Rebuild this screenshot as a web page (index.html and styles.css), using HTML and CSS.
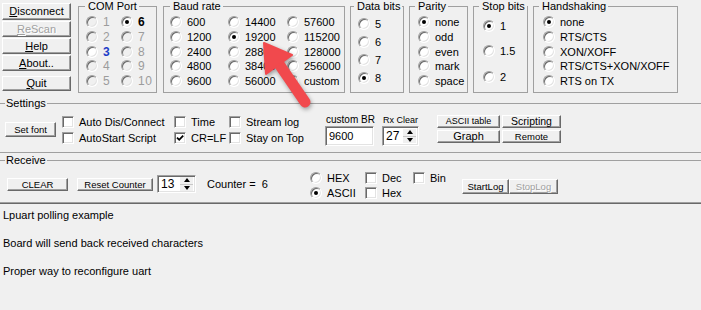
FILE: index.html
```html
<!DOCTYPE html>
<html>
<head>
<meta charset="utf-8">
<link rel="stylesheet" href="styles.css">
</head>
<body>
<div class="top">
  <div class="btncol">
    <div class="btn b1"><u>D</u>isconnect</div>
    <div class="btn dis"><u>R</u>eScan</div>
    <div class="btn"><u>H</u>elp</div>
    <div class="btn"><u>A</u>bout..</div>
    <div class="btn quit"><u>Q</u>uit</div>
  </div>

  <fieldset class="grp com">
    <legend>COM Port</legend>
    <div class="g5">
      <div class="r off"><i class="rb"></i>1</div>
      <div class="r off"><i class="rb"></i>2</div>
      <div class="r avail"><i class="rb"></i>3</div>
      <div class="r off"><i class="rb"></i>4</div>
      <div class="r off"><i class="rb"></i>5</div>
      <div class="r sel"><i class="rb on"></i>6</div>
      <div class="r off"><i class="rb"></i>7</div>
      <div class="r off"><i class="rb"></i>8</div>
      <div class="r off"><i class="rb"></i>9</div>
      <div class="r off"><i class="rb"></i>10</div>
    </div>
  </fieldset>

  <fieldset class="grp baud">
    <legend>Baud rate</legend>
    <div class="g5">
      <div class="r"><i class="rb"></i>600</div>
      <div class="r"><i class="rb"></i>1200</div>
      <div class="r"><i class="rb"></i>2400</div>
      <div class="r"><i class="rb"></i>4800</div>
      <div class="r"><i class="rb"></i>9600</div>
      <div class="r"><i class="rb"></i>14400</div>
      <div class="r"><i class="rb on"></i>19200</div>
      <div class="r"><i class="rb"></i>28800</div>
      <div class="r"><i class="rb"></i>38400</div>
      <div class="r"><i class="rb"></i>56000</div>
      <div class="r"><i class="rb"></i>57600</div>
      <div class="r"><i class="rb"></i>115200</div>
      <div class="r"><i class="rb"></i>128000</div>
      <div class="r"><i class="rb"></i>256000</div>
      <div class="r"><i class="rb"></i>custom</div>
    </div>
  </fieldset>

  <fieldset class="grp data">
    <legend>Data bits</legend>
    <div class="g4">
      <div class="r"><i class="rb"></i>5</div>
      <div class="r"><i class="rb"></i>6</div>
      <div class="r"><i class="rb"></i>7</div>
      <div class="r"><i class="rb on"></i>8</div>
    </div>
  </fieldset>

  <fieldset class="grp parity">
    <legend>Parity</legend>
    <div class="g5">
      <div class="r"><i class="rb on"></i>none</div>
      <div class="r"><i class="rb"></i>odd</div>
      <div class="r"><i class="rb"></i>even</div>
      <div class="r"><i class="rb"></i>mark</div>
      <div class="r"><i class="rb"></i>space</div>
    </div>
  </fieldset>

  <fieldset class="grp stop">
    <legend>Stop bits</legend>
    <div class="g3">
      <div class="r"><i class="rb on"></i>1</div>
      <div class="r"><i class="rb"></i>1.5</div>
      <div class="r"><i class="rb"></i>2</div>
    </div>
  </fieldset>

  <fieldset class="grp hand">
    <legend>Handshaking</legend>
    <div class="g5">
      <div class="r"><i class="rb on"></i>none</div>
      <div class="r"><i class="rb"></i>RTS/CTS</div>
      <div class="r"><i class="rb"></i>XON/XOFF</div>
      <div class="r"><i class="rb"></i>RTS/CTS+XON/XOFF</div>
      <div class="r"><i class="rb"></i>RTS on TX</div>
    </div>
  </fieldset>
</div>

<fieldset class="sect settings">
  <legend>Settings</legend>
  <div class="srow">
    <div class="btn setfont">Set font</div>
    <div class="ccol col1">
      <div class="c"><i class="cb"></i>Auto Dis/Connect</div>
      <div class="c"><i class="cb"></i>AutoStart Script</div>
    </div>
    <div class="ccol col2">
      <div class="c"><i class="cb"></i>Time</div>
      <div class="c"><i class="cb"><svg class="chk" viewBox="0 0 10 10" width="10" height="10"><path d="M2 4.6 L4.2 6.8 L8.2 2.6" fill="none" stroke="#000" stroke-width="1.8"/></svg></i>CR=LF</div>
    </div>
    <div class="ccol col3">
      <div class="c"><i class="cb"></i>Stream log</div>
      <div class="c"><i class="cb"></i>Stay on Top</div>
    </div>
    <div class="fld cbr">
      <div class="flab">custom BR</div>
      <div class="edit">9600</div>
    </div>
    <div class="fld rxc">
      <div class="flab rxlab">Rx Clear</div>
      <div class="spin"><span class="val">27</span><span class="arrows"><span class="ab"><i class="up"></i></span><span class="ab"><i class="dn"></i></span></span></div>
    </div>
    <div class="bgrid">
      <div class="btn sm9">ASCII table</div>
      <div class="btn sm105">Scripting</div>
      <div class="btn">Graph</div>
      <div class="btn sm95">Remote</div>
    </div>
  </div>
</fieldset>

<fieldset class="sect receive">
  <legend>Receive</legend>
  <div class="rrow">
    <div class="btn clear">CLEAR</div>
    <div class="btn reset">Reset Counter</div>
    <div class="spin spin13"><span class="val">13</span><span class="arrows"><span class="ab"><i class="up"></i></span><span class="ab"><i class="dn"></i></span></span></div>
    <div class="counter">Counter =&nbsp; 6</div>
    <div class="rgrp">
      <div class="r"><i class="rb"></i>HEX</div>
      <div class="r"><i class="rb on"></i>ASCII</div>
    </div>
    <div class="rgrp decg">
      <div class="c"><i class="cb"></i>Dec</div>
      <div class="c"><i class="cb"></i>Hex</div>
    </div>
    <div class="rgrp bing">
      <div class="c"><i class="cb"></i>Bin</div>
    </div>
    <div class="btn logb start">StartLog</div>
    <div class="btn logb stoplog dis">StopLog</div>
  </div>
</fieldset>

<div class="memo">
  <div>Lpuart polling example</div>
  <div>&nbsp;</div>
  <div>Board will send back received characters</div>
  <div>&nbsp;</div>
  <div>Proper way to reconfigure uart</div>
</div>

<svg class="arrow" width="701" height="310" viewBox="0 0 701 310">
  <g fill="#f1494d" stroke="#f1494d">
    <line x1="279" y1="64" x2="305" y2="102" stroke-width="11" stroke-linecap="round"/>
    <polygon points="264,43 292,55 266,74" stroke-width="2" stroke-linejoin="round"/>
  </g>
</svg>
</body>
</html>
```
FILE: styles.css
```css
* { box-sizing: border-box; }
html, body { margin: 0; padding: 0; }
body {
  background: #f0f0f0;
  font-family: "Liberation Sans", Arial, sans-serif;
  font-size: 11px;
  color: #000;
  width: 701px;
  height: 310px;
  overflow: hidden;
  position: relative;
}

/* buttons */
.btn {
  display: flex;
  align-items: center;
  justify-content: center;
  background: #f0f0f0;
  border: 1px solid;
  border-color: #fff #696969 #696969 #fff;
  box-shadow: inset -1px -1px #a0a0a0;
  white-space: nowrap;
  color: #000;
  line-height: 11px;
}
.btn.dis { color: #a0a0a0; text-shadow: 1px 1px #fff; }

.top { display: flex; height: 93px; padding-left: 2px; }
.btncol { width: 69px; padding-top: 3px; display: flex; flex-direction: column; gap: 1px; flex: none; }
.btncol .btn { height: 16px; line-height: 13px; }
.btncol .b1 { height: 17px; }
.btncol .quit { margin-top: 4px; height: 15px; }

/* group boxes */
.grp {
  margin: 0;
  padding: 0;
  border: 1px solid #a0a0a0;
  height: 93px;
  min-width: 0;
  flex: none;
}
.grp legend { padding: 0 2px 0 3px; line-height: 13px; font-size: 11px; }
.g5 { display: grid; grid-auto-flow: column; grid-template-rows: repeat(5, 14.7px); padding-top: 2px; }
.g4 { display: grid; grid-template-rows: repeat(4, 18px); padding-top: 2px; }
.g3 { display: grid; grid-template-rows: repeat(3, 25.5px); }

.com { width: 79px; margin-left: 7px; }
.com legend { margin-left: 6px; }
.com .g5 { padding-left: 7px; grid-template-columns: 35px auto; }
.com .r { font-size: 12px; letter-spacing: 0.5px; }
.com .r.off { color: #9c9c9c; }
.com .r.avail { color: #1c3cc8; font-weight: bold; }
.com .r.sel { font-weight: bold; }
.com .r.off .rb { background: #f0f0f0; }

.baud { width: 182px; margin-left: 6px; }
.baud legend { margin-left: 6px; }
.baud .g5 { padding-left: 6px; grid-template-columns: 58px 59px auto; }

.data { width: 54px; margin-left: 5px; }
.data legend { margin-left: 3px; }
.data .g4 { padding-left: 7px; }

.parity { width: 59px; margin-left: 5px; }
.parity legend { margin-left: 5px; }
.parity .g5 { padding-left: 8px; }

.stop { width: 55px; margin-left: 5px; }
.stop legend { margin-left: 5px; }
.stop .g3 { padding-left: 9px; }

.hand { width: 145px; margin-left: 5px; }
.hand legend { margin-left: 5px; }
.hand .g5 { padding-left: 9px; }

/* radio */
.r { display: flex; align-items: center; gap: 5px; white-space: nowrap; }
.rb {
  width: 12px; height: 12px; flex: none;
  border-radius: 50%;
  background: #fff;
  border: 1px solid;
  border-color: #a0a0a0 #fff #fff #a0a0a0;
  box-shadow: inset 1px 1px #696969, inset -1px -1px #e3e3e3;
  position: relative;
}
.rb.on::after {
  content: "";
  position: absolute;
  left: 3px; top: 3px;
  width: 4px; height: 4px;
  border-radius: 50%;
  background: #000;
}

/* checkbox */
.c { display: flex; align-items: center; gap: 5px; white-space: nowrap; }
.cb {
  width: 12px; height: 12px; flex: none;
  background: #fff;
  border: 1px solid;
  border-color: #a0a0a0 #fff #fff #a0a0a0;
  box-shadow: inset 1px 1px #696969, inset -1px -1px #e3e3e3;
  display: flex; align-items: center; justify-content: center;
}
.chk { display: block; }

/* sections */
.sect {
  margin: 0;
  padding: 0;
  border: none;
  border-top: 1px solid #a0a0a0;
  border-bottom: 1px solid #a0a0a0;
  min-width: 0;
}
.sect legend { margin-left: 5px; padding: 0 1px; line-height: 13px; }
.settings { margin-top: 4px; height: 56px; }
.receive { margin-top: 1px; height: 49px; }

.srow, .rrow { display: flex; align-items: flex-start; }

.setfont { margin: 12px 0 0 5px; width: 51px; height: 15px; font-size: 9.5px; }
.ccol { display: flex; flex-direction: column; margin-top: 4px; flex: none; }
.ccol .c { height: 16px; }
.col1 { margin-left: 6px; width: 112px; }
.col2 { width: 55px; }
.col3 { width: 96px; }

.fld { margin-top: 4px; flex: none; }
.flab { font-size: 10px; line-height: 12px; height: 12px; padding-left: 1px; white-space: nowrap; }
.rxlab { font-size: 9px; }
.cbr { width: 49px; }
.rxc { width: 37px; margin-left: 8px; }

.edit, .spin {
  background: #fff;
  border: 1px solid;
  border-color: #a0a0a0 #fff #fff #a0a0a0;
  box-shadow: inset 1px 1px #696969, inset -1px -1px #e3e3e3;
}
.edit { height: 20px; padding: 2px 0 0 3px; line-height: 15px; font-size: 11px; }
.spin { height: 20px; display: flex; padding: 2px 2px 2px 2px; }
.spin .val { flex: 1; font-size: 12px; line-height: 15px; padding-left: 1px; }
.arrows { width: 13px; display: flex; flex-direction: column; background: #f0f0f0; }
.ab { flex: 1; display: flex; align-items: center; justify-content: center; border-bottom: 1px solid #c8c8c8; }
.ab:last-child { border-bottom: none; }
.up, .dn { width: 0; height: 0; border-left: 3.5px solid transparent; border-right: 3.5px solid transparent; }
.up { border-bottom: 4px solid #000; }
.dn { border-top: 4px solid #000; }

.bgrid {
  margin: 5px 0 0 18px;
  display: grid;
  grid-template-columns: 63px 59px;
  grid-auto-rows: 13px;
  gap: 2px;
}
.sm9 { font-size: 9px; }
.sm95 { font-size: 9.5px; }
.sm105 { font-size: 10.5px; }

/* receive row */
.clear { margin: 11px 0 0 7px; width: 61px; height: 13px; font-size: 9.5px; }
.reset { margin: 11px 0 0 9px; width: 76px; height: 13px; font-size: 9.5px; }
.spin13 { margin: 8px 0 0 4px; width: 39px; height: 18px; padding: 1px 2px; }
.counter { margin: 11px 0 0 11px; width: 103px; line-height: 13px; white-space: nowrap; }
.rgrp { margin-top: 3px; width: 55px; display: grid; grid-auto-rows: 15px; flex: none; }
.decg { width: 48px; }
.bing { width: 49px; }
.logb { margin-top: 12px; height: 15px; font-size: 9.5px; }
.start { width: 47px; }
.stoplog { width: 49px; }

/* memo */
.memo {
  border-top: 1px solid #696969;
  padding: 4px 0 0 3px;
  line-height: 14px;
  height: 107px;
}

.arrow {
  position: absolute;
  left: 0; top: 0;
  pointer-events: none;
  filter: drop-shadow(1px 2px 2px rgba(0,0,0,0.35));
}
```
